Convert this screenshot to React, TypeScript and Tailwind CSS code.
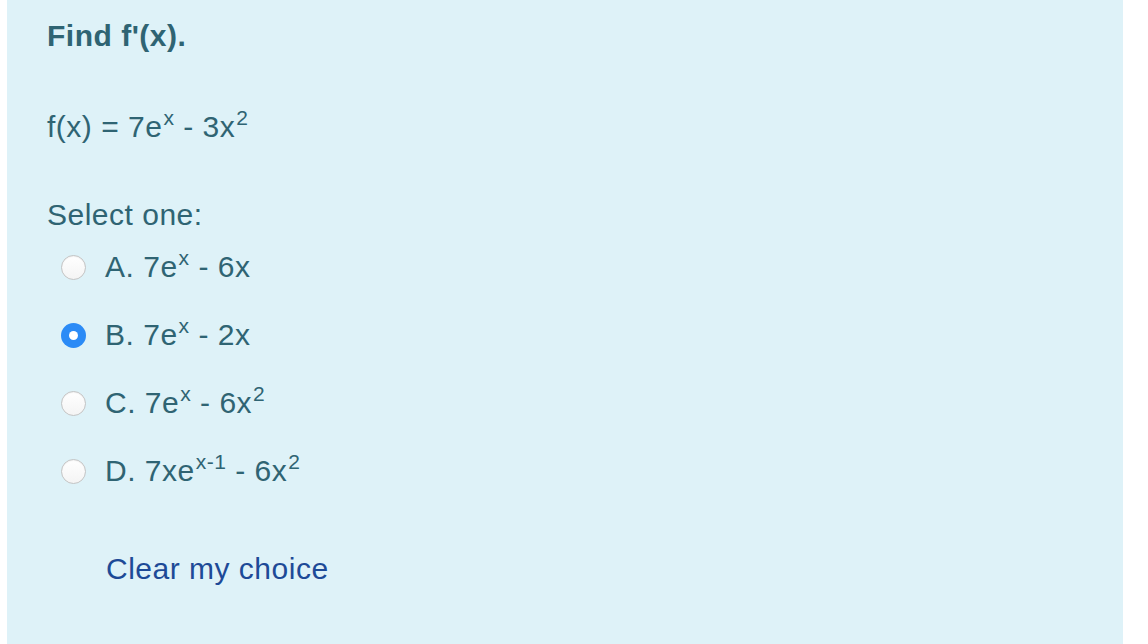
import React from "react"

type Option = { letter: string; body: React.ReactNode; checked?: boolean }

function Sup({ children }: { children: React.ReactNode }) {
  return (
    <span className="relative -top-[12px] ml-[1px] text-[21px] leading-none">
      {children}
    </span>
  )
}

function Radio({ checked }: { checked?: boolean }) {
  if (checked) {
    return (
      <span className="flex h-[25px] w-[25px] shrink-0 items-center justify-center rounded-full bg-[#2b8bf6]">
        <span className="h-[9px] w-[9px] rounded-full bg-white" />
      </span>
    )
  }
  return (
    <span className="h-[25px] w-[25px] shrink-0 rounded-full border border-[#c4c4c4] bg-gradient-to-b from-white to-[#f4f4f4] shadow-[inset_0_1px_1px_rgba(0,0,0,0.05)]" />
  )
}

export default function App() {
  const options: Option[] = [
    {
      letter: "A.",
      body: (
        <>
          7e<Sup>x</Sup> - 6x
        </>
      ),
    },
    {
      letter: "B.",
      body: (
        <>
          7e<Sup>x</Sup> - 2x
        </>
      ),
      checked: true,
    },
    {
      letter: "C.",
      body: (
        <>
          7e<Sup>x</Sup> - 6x<Sup>2</Sup>
        </>
      ),
    },
    {
      letter: "D.",
      body: (
        <>
          7xe<Sup>x-1</Sup> - 6x<Sup>2</Sup>
        </>
      ),
    },
  ]

  return (
    <div className="h-[644px] w-[1148px] bg-white font-['Liberation_Sans',Arial,sans-serif] tracking-[0.5px] text-[#2f6473]">
      <div className="ml-[7px] h-full w-[1116px] bg-[#def2f8] pl-[40px] pt-[21px]">
        {/* Question */}
        <div className="text-[30px] font-bold leading-none">Find f'(x).</div>

        <div className="mt-[61px] text-[30px] leading-none">
          f(x) = 7e<Sup>x</Sup> - 3x<Sup>2</Sup>
        </div>

        {/* Answers */}
        <div className="mt-[58px] text-[30px] leading-none">Select one:</div>

        <div className="mt-[22px] flex flex-col gap-[38px]">
          {options.map((o) => (
            <label key={o.letter} className="ml-[14px] flex h-[30px] items-center">
              <Radio checked={o.checked} />
              <span className="ml-[19px] whitespace-nowrap text-[30px] leading-none">
                {o.letter} {o.body}
              </span>
            </label>
          ))}
        </div>

        <div className="ml-[59px] mt-[68px] text-[30px] leading-none text-[#1d4a97]">
          Clear my choice
        </div>
      </div>
    </div>
  )
}
